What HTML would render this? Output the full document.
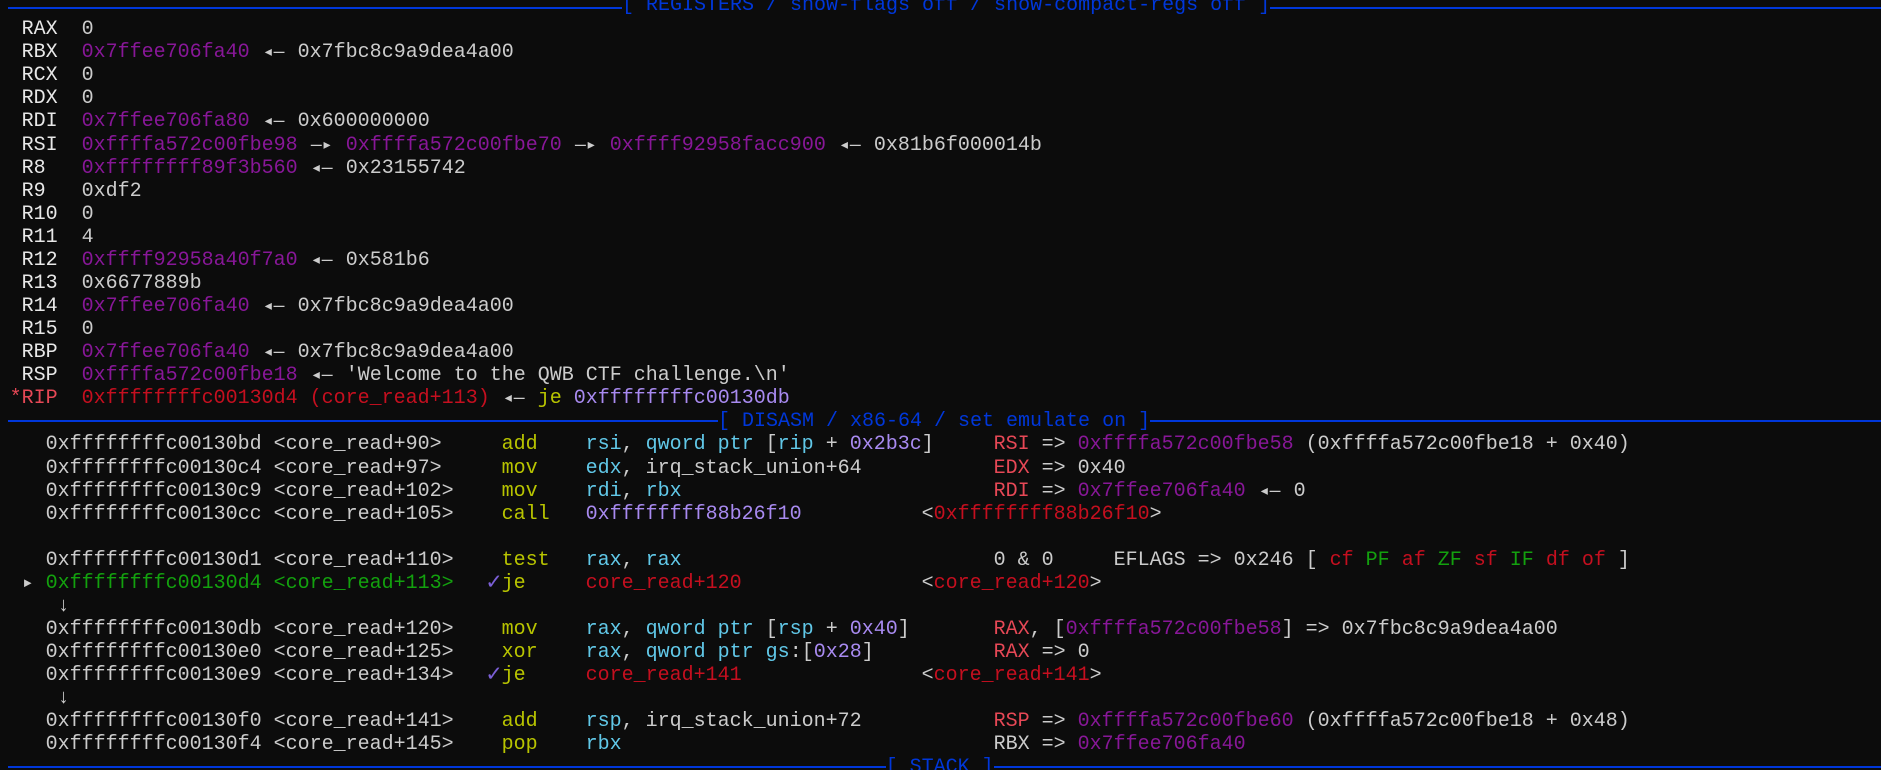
<!DOCTYPE html>
<html><head><meta charset="utf-8"><style>
html,body{margin:0;padding:0;background:#0c0c0c;width:1881px;height:770px;overflow:hidden}
body{position:relative;font-family:"Liberation Mono","DejaVu Sans Mono",monospace;font-size:20px;color:#cccccc}
.row{position:absolute;left:0;height:23px;line-height:23px;white-space:pre;width:1881px;margin-top:2px}
.row span{white-space:pre}
.s{position:absolute;top:0}
.w{color:#cccccc}.W{color:#e8e8e8}.m{color:#881798}.r{color:#c50f1f}.R{color:#e74856}.g{color:#13a10e}.y{color:#b8c400}.c{color:#61c8e8}.l{color:#a88af0}.p{color:#7b5fd6}
.ar{display:inline-block;width:24px;text-align:center;font-size:18px}
.ic{display:inline-block;width:12px;text-align:center}
.ck{font-size:24px;font-weight:bold;margin-left:-3px}
.hdr{position:absolute;left:8px;right:0;height:2px;background:#0037da}
.lab{position:absolute;background:#0c0c0c;color:#0037da;line-height:23px;white-space:pre;padding:0}
.a0{left:9.6px}.a1{left:21.6px}.a3{left:45.6px}.a4{left:57.6px}.a22{left:273.6px}.a40{left:489.6px}.a41{left:501.6px}.a48{left:585.6px}.a76{left:921.6px}.a82{left:993.6px}.a92{left:1113.6px}
.reg{left:9.6px}
</style></head><body>

<div class="hdr" style="top:7px"></div>
<div class="lab" style="top:-6px;left:622px">[ REGISTERS / show-flags off / show-compact-regs off ]</div>

<div class="row reg" style="top:16.1px"><span class="W"> RAX</span>  0</div>
<div class="row reg" style="top:39.2px"><span class="W"> RBX</span>  <span class="m">0x7ffee706fa40</span> <span class="ar">◂—</span> 0x7fbc8c9a9dea4a00</div>
<div class="row reg" style="top:62.2px"><span class="W"> RCX</span>  0</div>
<div class="row reg" style="top:85.3px"><span class="W"> RDX</span>  0</div>
<div class="row reg" style="top:108.4px"><span class="W"> RDI</span>  <span class="m">0x7ffee706fa80</span> <span class="ar">◂—</span> 0x600000000</div>
<div class="row reg" style="top:131.5px"><span class="W"> RSI</span>  <span class="m">0xffffa572c00fbe98</span> <span class="ar">—▸</span> <span class="m">0xffffa572c00fbe70</span> <span class="ar">—▸</span> <span class="m">0xffff92958facc900</span> <span class="ar">◂—</span> 0x81b6f000014b</div>
<div class="row reg" style="top:154.5px"><span class="W"> R8</span>   <span class="m">0xffffffff89f3b560</span> <span class="ar">◂—</span> 0x23155742</div>
<div class="row reg" style="top:177.6px"><span class="W"> R9</span>   0xdf2</div>
<div class="row reg" style="top:200.7px"><span class="W"> R10</span>  0</div>
<div class="row reg" style="top:223.7px"><span class="W"> R11</span>  4</div>
<div class="row reg" style="top:246.8px"><span class="W"> R12</span>  <span class="m">0xffff92958a40f7a0</span> <span class="ar">◂—</span> 0x581b6</div>
<div class="row reg" style="top:269.9px"><span class="W"> R13</span>  0x6677889b</div>
<div class="row reg" style="top:292.9px"><span class="W"> R14</span>  <span class="m">0x7ffee706fa40</span> <span class="ar">◂—</span> 0x7fbc8c9a9dea4a00</div>
<div class="row reg" style="top:316.0px"><span class="W"> R15</span>  0</div>
<div class="row reg" style="top:339.1px"><span class="W"> RBP</span>  <span class="m">0x7ffee706fa40</span> <span class="ar">◂—</span> 0x7fbc8c9a9dea4a00</div>
<div class="row reg" style="top:362.2px"><span class="W"> RSP</span>  <span class="m">0xffffa572c00fbe18</span> <span class="ar">◂—</span> 'Welcome to the QWB CTF challenge.\n'</div>
<div class="row reg" style="top:385.2px"><span class="R">*RIP</span>  <span class="r">0xffffffffc00130d4 (core_read+113)</span> <span class="ar">◂—</span> <span class="y">je</span> <span class="l">0xffffffffc00130db</span></div>

<div class="hdr" style="top:420px"></div>
<div class="lab" style="top:409.5px;left:718px">[ DISASM / x86-64 / set emulate on ]</div>

<div class="row" style="top:431.4px"><span class="s a3">0xffffffffc00130bd</span><span class="s a22">&lt;core_read+90&gt;</span><span class="s a41 y">add</span><span class="s a48"><span class="c">rsi</span>, <span class="c">qword ptr</span> [<span class="c">rip</span> + <span class="l">0x2b3c</span>]</span><span class="s a82"><span class="R">RSI</span> =&gt; <span class="m">0xffffa572c00fbe58</span> (0xffffa572c00fbe18 + 0x40)</span></div>
<div class="row" style="top:454.5px"><span class="s a3">0xffffffffc00130c4</span><span class="s a22">&lt;core_read+97&gt;</span><span class="s a41 y">mov</span><span class="s a48"><span class="c">edx</span>, irq_stack_union+64</span><span class="s a82"><span class="R">EDX</span> =&gt; 0x40</span></div>
<div class="row" style="top:477.5px"><span class="s a3">0xffffffffc00130c9</span><span class="s a22">&lt;core_read+102&gt;</span><span class="s a41 y">mov</span><span class="s a48"><span class="c">rdi</span>, <span class="c">rbx</span></span><span class="s a82"><span class="R">RDI</span> =&gt; <span class="m">0x7ffee706fa40</span> <span class="ar">◂—</span> 0</span></div>
<div class="row" style="top:500.6px"><span class="s a3">0xffffffffc00130cc</span><span class="s a22">&lt;core_read+105&gt;</span><span class="s a41 y">call</span><span class="s a48 l">0xffffffff88b26f10</span><span class="s a76">&lt;<span class="r">0xffffffff88b26f10</span>&gt;</span></div>

<div class="row" style="top:546.7px"><span class="s a3">0xffffffffc00130d1</span><span class="s a22">&lt;core_read+110&gt;</span><span class="s a41 y">test</span><span class="s a48"><span class="c">rax</span>, <span class="c">rax</span></span><span class="s a82">0 &amp; 0</span><span class="s a92">EFLAGS =&gt; 0x246 [ <span class="r">cf</span> <span class="g">PF</span> <span class="r">af</span> <span class="g">ZF</span> <span class="r">sf</span> <span class="g">IF</span> <span class="r">df</span> <span class="r">of</span> ]</span></div>
<div class="row" style="top:569.8px"><span class="s a1 ic" style="font-size:13px">►</span><span class="s a3 g">0xffffffffc00130d4</span><span class="s a22 g">&lt;core_read+113&gt;</span><span class="s a40 p ic ck">✓</span><span class="s a41 y">je</span><span class="s a48 r">core_read+120</span><span class="s a76">&lt;<span class="r">core_read+120</span>&gt;</span></div>
<div class="row" style="top:592.9px"><span class="s a4 ic">↓</span></div>
<div class="row" style="top:615.9px"><span class="s a3">0xffffffffc00130db</span><span class="s a22">&lt;core_read+120&gt;</span><span class="s a41 y">mov</span><span class="s a48"><span class="c">rax</span>, <span class="c">qword ptr</span> [<span class="c">rsp</span> + <span class="l">0x40</span>]</span><span class="s a82"><span class="R">RAX</span>, [<span class="m">0xffffa572c00fbe58</span>] =&gt; 0x7fbc8c9a9dea4a00</span></div>
<div class="row" style="top:639.0px"><span class="s a3">0xffffffffc00130e0</span><span class="s a22">&lt;core_read+125&gt;</span><span class="s a41 y">xor</span><span class="s a48"><span class="c">rax</span>, <span class="c">qword ptr</span> <span class="c">gs</span>:[<span class="l">0x28</span>]</span><span class="s a82"><span class="R">RAX</span> =&gt; 0</span></div>
<div class="row" style="top:662.1px"><span class="s a3">0xffffffffc00130e9</span><span class="s a22">&lt;core_read+134&gt;</span><span class="s a40 p ic ck">✓</span><span class="s a41 y">je</span><span class="s a48 r">core_read+141</span><span class="s a76">&lt;<span class="r">core_read+141</span>&gt;</span></div>
<div class="row" style="top:685.2px"><span class="s a4 ic">↓</span></div>
<div class="row" style="top:708.2px"><span class="s a3">0xffffffffc00130f0</span><span class="s a22">&lt;core_read+141&gt;</span><span class="s a41 y">add</span><span class="s a48"><span class="c">rsp</span>, irq_stack_union+72</span><span class="s a82"><span class="R">RSP</span> =&gt; <span class="m">0xffffa572c00fbe60</span> (0xffffa572c00fbe18 + 0x48)</span></div>
<div class="row" style="top:731.3px"><span class="s a3">0xffffffffc00130f4</span><span class="s a22">&lt;core_read+145&gt;</span><span class="s a41 y">pop</span><span class="s a48 c">rbx</span><span class="s a82">RBX =&gt; <span class="m">0x7ffee706fa40</span></span></div>

<div class="hdr" style="top:766px"></div>
<div class="lab" style="top:756px;left:885.6px">[ STACK ]</div>

</body></html>
